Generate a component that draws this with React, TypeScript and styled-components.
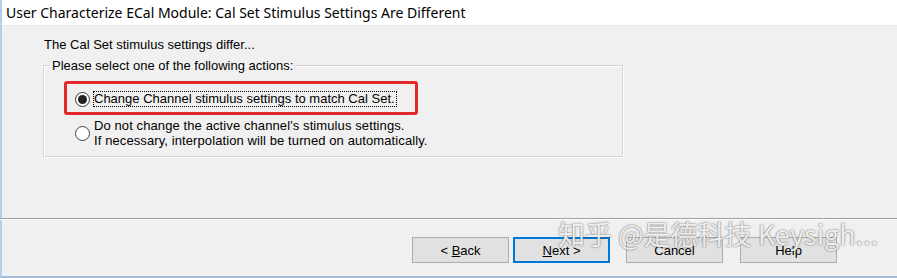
import React from "react";
import styled, { createGlobalStyle } from "styled-components";

const Global = createGlobalStyle`
  html, body { margin: 0; padding: 0; background: #f0f0f0; }
  body { width: 897px; height: 278px; overflow: hidden; }
`;

const Window = styled.div`
  position: relative;
  width: 897px;
  height: 278px;
  box-sizing: border-box;
  display: flex;
  flex-direction: column;
  background: #f0f0f0;
  border-left: 2px solid #b5cfe9;
  border-bottom: 2px solid #a4bcd9;
  font-family: "Liberation Sans", Arial, sans-serif;
  font-size: 13px;
  color: #000;
`;

const TitleBar = styled.div`
  height: 26px;
  flex: none;
  background: #fff;
  display: flex;
  align-items: center;
  padding-left: 4px;
  font-family: "Noto Sans", "Segoe UI", sans-serif;
  font-size: 14px;
  color: #000;
  border-bottom: 1px solid #e8e8e8;
  box-sizing: border-box;
`;

const Body = styled.div`
  flex: 1;
  display: flex;
  flex-direction: column;
  padding: 11px 0 0 41px;
`;

const Intro = styled.div`
  line-height: 15px;
  margin-left: 1px;
`;

const Group = styled.fieldset`
  position: relative;
  width: 580px;
  height: 99px;
  box-sizing: border-box;
  margin: 6px 0 0 0;
  padding: 0 0 0 6px;
  border: 1px solid #d5d5d5;
  box-shadow: inset 1px 1px 0 #fff, 1px 1px 0 #fff;
`;

const Legend = styled.legend`
  padding: 0 2px;
  line-height: 15px;
`;

const Options = styled.div`
  display: flex;
  flex-direction: column;
  gap: 11px;
  margin: 18px 0 0 25px;
`;

const Option = styled.label<{ $highlight?: boolean }>`
  position: relative;
  display: flex;
  align-items: center;
  gap: 3px;

  &::after {
    content: "";
    display: ${(p) => (p.$highlight ? "block" : "none")};
    position: absolute;
    left: -11px;
    top: -10px;
    width: 354px;
    height: 34px;
    box-sizing: border-box;
    border: 3px solid #e32a2a;
    border-radius: 3px;
    pointer-events: none;
  }
`;

const Radio = styled.span<{ $checked?: boolean }>`
  flex: none;
  width: 15px;
  height: 15px;
  box-sizing: border-box;
  border-radius: 50%;
  border: 1px solid ${(p) => (p.$checked ? "#333" : "#444")};
  background: #fff;
  display: flex;
  align-items: center;
  justify-content: center;

  &::before {
    content: "";
    display: ${(p) => (p.$checked ? "block" : "none")};
    width: 9px;
    height: 9px;
    border-radius: 50%;
    background: #222;
  }
`;

const OptionText = styled.span<{ $focused?: boolean }>`
  line-height: 14px;
  padding: 0 1px 0 0;
  border: 1px ${(p) => (p.$focused ? "dotted #000" : "solid transparent")};
`;

const MultiText = styled.span`
  line-height: 15px;
  margin-left: 1px;
  letter-spacing: 0.1px;
`;

const Separator = styled.div`
  height: 1px;
  flex: none;
  margin-left: -2px;
  background: #a0a0a0;
  box-shadow: 0 1px 0 #fff;
`;

const ButtonRow = styled.div`
  flex: none;
  height: 57px;
  display: flex;
  justify-content: flex-end;
  align-items: flex-start;
  padding: 18px 60px 0 0;
  box-sizing: border-box;
`;

const Button = styled.button<{ $default?: boolean; $gap?: number }>`
  width: 97px;
  height: 26px;
  margin-left: ${(p) => p.$gap ?? 0}px;
  box-sizing: border-box;
  background: #e1e1e1;
  border: ${(p) => (p.$default ? "2px solid #0078d7" : "1px solid #adadad")};
  font-family: "Liberation Sans", Arial, sans-serif;
  font-size: 13px;
  color: #000;
  padding: 0;
  u { text-decoration: underline; }
`;

const Watermark = styled.div`
  position: absolute;
  left: 556px;
  top: 217px;
  font-family: "Noto Sans CJK SC", "Noto Sans", sans-serif;
  font-size: 27px;
  line-height: 33px;
  color: rgba(255, 255, 255, 0.9);
  text-shadow: 0 0 2px rgba(60, 60, 60, 0.6), 0 0 1px rgba(60, 60, 60, 0.5);
  white-space: nowrap;
  pointer-events: none;
`;

export default function App() {
  return (
    <>
      <Global />
      <Window>
        <TitleBar>User Characterize ECal Module: Cal Set Stimulus Settings Are Different</TitleBar>
        <Body>
          <Intro>The Cal Set stimulus settings differ...</Intro>
          <Group>
            <Legend>Please select one of the following actions:</Legend>
            <Options>
              <Option $highlight>
                <Radio $checked />
                <OptionText $focused>Change Channel stimulus settings to match Cal Set.</OptionText>
              </Option>
              <Option>
                <Radio />
                <MultiText>
                  Do not change the active channel's stimulus settings.
                  <br />
                  If necessary, interpolation will be turned on automatically.
                </MultiText>
              </Option>
            </Options>
          </Group>
        </Body>
        <Separator />
        <ButtonRow>
          <Button>
            &lt; <u>B</u>ack
          </Button>
          <Button $default $gap={4}>
            <u>N</u>ext &gt;
          </Button>
          <Button $gap={16}>Cancel</Button>
          <Button $gap={17}>Help</Button>
        </ButtonRow>
        <Watermark>知乎 @是德科技 Keysigh...</Watermark>
      </Window>
    </>
  );
}
